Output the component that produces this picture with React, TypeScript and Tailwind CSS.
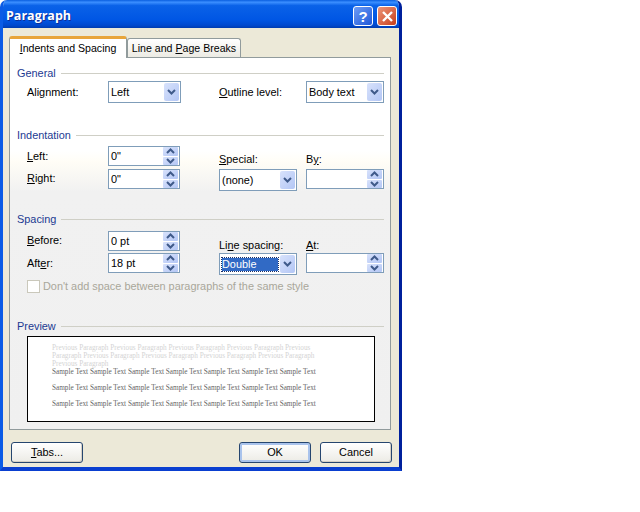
import React from "react";

const Chevron = ({ up = false }: { up?: boolean }) => (
  <svg width="9" height="6" viewBox="0 0 9 6" className={up ? "rotate-180" : ""}>
    <path d="M1 1 L4.5 4.5 L8 1" fill="none" stroke="#3f5a8a" strokeWidth="2" />
  </svg>
);

const Combo = ({ value, width, selected = false }: { value: string; width: string; selected?: boolean }) => (
  <div className={`flex h-[22px] ${width} items-center border border-[#7f9db9] bg-white p-px`}>
    <div className="min-w-0 flex-1">
      {selected ? (
        <span className="ml-px block h-[13px] w-[56px] bg-[#316ac5] leading-[13px] text-white outline-1 outline-dotted outline-[#1a2f66]">{value}</span>
      ) : (
        <span className="pl-px">{value}</span>
      )}
    </div>
    <div className="flex h-[18px] w-[15px] items-center justify-center rounded-[2px] bg-gradient-to-br from-[#d8e2fb] to-[#b3c6f5]">
      <Chevron />
    </div>
  </div>
);

const Spinner = ({ value, width }: { value?: string; width: string }) => (
  <div className={`flex h-[20px] ${width} items-center border border-[#7f9db9] bg-white p-px`}>
    <div className="min-w-0 flex-1 pl-[1px]">{value}</div>
    <div className="flex h-[18px] w-[15px] flex-col gap-px">
      <div className="flex h-[8.5px] items-center justify-center rounded-[1px] bg-gradient-to-br from-[#d8e2fb] to-[#b3c6f5]">
        <Chevron up />
      </div>
      <div className="flex h-[8.5px] items-center justify-center rounded-[1px] bg-gradient-to-br from-[#d8e2fb] to-[#b3c6f5]">
        <Chevron />
      </div>
    </div>
  </div>
);

const SectionHead = ({ title }: { title: string }) => (
  <div className="flex h-[14px] items-center gap-[5px] text-[#1c3a92]">
    <span className="leading-[14px]">{title}</span>
    <div className="h-px flex-1 bg-[#cfcfc6]" />
  </div>
);

const DialogButton = ({ children, primary = false }: { children: React.ReactNode; primary?: boolean }) => (
  <button
    className={`flex h-[21px] w-[72px] items-center justify-center rounded-[3px] border border-[#26466f] bg-gradient-to-b from-white to-[#ecebe5] ${
      primary ? "shadow-[inset_0_0_0_2px_#a9c3ec]" : "shadow-[inset_-1px_-1px_0_#d6d0c5]"
    }`}
  >
    {children}
  </button>
);

const previous = [
  "Previous Paragraph Previous Paragraph Previous Paragraph Previous Paragraph Previous",
  "Paragraph Previous Paragraph Previous Paragraph Previous Paragraph Previous Paragraph",
  "Previous Paragraph",
];
const sample = "Sample Text Sample Text Sample Text Sample Text Sample Text Sample Text Sample Text";

export default function App() {
  return (
    <div className="h-[512px] w-[640px] bg-white font-['Liberation_Sans',sans-serif] text-[10.9px] text-black">
      <div className="flex h-[471px] w-[402px] flex-col overflow-hidden rounded-t-[7px] border-x-[3px] border-b-[4px] border-r-[#00209c] border-l-[#0a5be6] border-b-[#0a3fd0] bg-[#ece9d8]">
        {/* Title bar */}
        <div className="-mx-[3px] flex h-[28px] shrink-0 items-center justify-between bg-[linear-gradient(to_bottom,#0a5fe0_0%,#3b8fff_8%,#0a62e8_20%,#0056e4_70%,#0049cf_90%,#003cb0_100%)] pl-[6px] pr-[5px] pt-[4px]">
          <span className="font-['Open_Sans',sans-serif] text-[12.5px] font-bold text-white [text-shadow:1px_1px_0_#0f2f96]">Paragraph</span>
          <div className="flex gap-[4px]">
            <div className="flex h-[20px] w-[20px] items-center justify-center rounded-[3px] border border-white bg-gradient-to-br from-[#6d9cf5] to-[#1f56d8] text-[15px] font-bold leading-none text-white">?</div>
            <div className="flex h-[20px] w-[20px] items-center justify-center rounded-[3px] border border-white bg-gradient-to-br from-[#ec9478] to-[#c83c14]">
              <svg width="13" height="13" viewBox="0 0 13 13">
                <path d="M2 2 L11 11 M11 2 L2 11" stroke="#fff" strokeWidth="2.4" />
              </svg>
            </div>
          </div>
        </div>

        {/* Tabs */}
        <div className="ml-[6px] mt-[7px] flex h-[22px] items-end text-[10.6px]">
          <div className="z-10 -mb-px flex h-[22px] w-[118px] items-center justify-center rounded-t-[3px] border-x border-t-[3px] border-x-[#919b9c] border-t-[#e8a53a] bg-white">
            <span><u>I</u>ndents and Spacing</span>
          </div>
          <div className="flex h-[19px] w-[114px] items-center justify-center rounded-t-[3px] border-x border-t border-[#919b9c] bg-gradient-to-b from-white to-[#ecebe4] pt-[2px]">
            <span>Line and <u>P</u>age Breaks</span>
          </div>
        </div>

        {/* Panel */}
        <div className="ml-[6px] h-[373px] w-[382px] border border-[#919b9c] bg-[linear-gradient(to_bottom,#ffffff_0%,#ffffff_25%,#fffdf6_28%,#f1f1f1_36%,#f0f0f0_100%)] pb-[7px] pl-[7px] pr-[6px] pt-[8px]">
          <SectionHead title="General" />
          <div className="ml-[10px] mt-px flex items-center">
            <span className="w-[81px]">Ali<u>g</u>nment:</span>
            <Combo value="Left" width="w-[73px]" />
            <span className="ml-[38px] w-[87px]"><u>O</u>utline level:</span>
            <Combo value="Body text" width="w-[78px]" />
          </div>

          <div className="mt-[25px]">
            <SectionHead title="Indentation" />
          </div>
          <div className="ml-[10px] mt-[4px] flex items-start">
            <div className="flex flex-col gap-[3px]">
              <div className="flex items-center">
                <span className="w-[81px]"><u>L</u>eft:</span>
                <Spinner value={'0"'} width="w-[72px]" />
              </div>
              <div className="flex items-center">
                <span className="w-[81px] pb-[2px]"><u>R</u>ight:</span>
                <Spinner value={'0"'} width="w-[72px]" />
              </div>
            </div>
            <div className="ml-[39px] w-[87px] pt-[6px]">
              <div className="mb-[3px] leading-[14px]"><u>S</u>pecial:</div>
              <Combo value="(none)" width="w-[78px]" />
            </div>
            <div className="pt-[6px]">
              <div className="mb-[3px] leading-[14px]">B<u>y</u>:</div>
              <Spinner width="w-[78px]" />
            </div>
          </div>

          <div className="mt-[21px]">
            <SectionHead title="Spacing" />
          </div>
          <div className="ml-[10px] mt-[5px] flex items-start">
            <div className="flex flex-col gap-[2px]">
              <div className="flex items-center">
                <span className="w-[81px] pb-[2px]"><u>B</u>efore:</span>
                <Spinner value="0 pt" width="w-[72px]" />
              </div>
              <div className="flex items-center">
                <span className="w-[81px]">Aft<u>e</u>r:</span>
                <Spinner value="18 pt" width="w-[72px]" />
              </div>
            </div>
            <div className="ml-[39px] w-[87px] pt-[7px]">
              <div className="mb-px leading-[14px]">Li<u>n</u>e spacing:</div>
              <Combo value="Double" width="w-[78px]" selected />
            </div>
            <div className="pt-[7px]">
              <div className="mb-px leading-[14px]"><u>A</u>t:</div>
              <Spinner width="w-[78px]" />
            </div>
          </div>

          <div className="ml-[10px] mt-[4px] flex h-[14px] items-center gap-[3px] text-[#a9a79a]">
            <div className="h-[13px] w-[13px] border border-[#cac8bb] bg-white" />
            <span>Don't add space between paragraphs of the same style</span>
          </div>

          <div className="mt-[26px]">
            <SectionHead title="Preview" />
          </div>
          <div className="ml-[10px] mt-[3px] h-[86px] w-[348px] border border-black bg-white pl-[24px] pt-[7px] font-['Liberation_Serif',serif] text-[7.24px] leading-[8px]">
            {previous.map((line) => (
              <div key={line} className="whitespace-nowrap text-[#d4d4d4]">{line}</div>
            ))}
            <div className="whitespace-nowrap text-[#666666]">{sample}</div>
            <div className="mt-[8px] whitespace-nowrap text-[#666666]">{sample}</div>
            <div className="mt-[8px] whitespace-nowrap text-[#666666]">{sample}</div>
          </div>
        </div>

        {/* Footer */}
        <div className="ml-[8px] mr-[7px] mt-[12px] flex items-center justify-between">
          <DialogButton><span><u>T</u>abs...</span></DialogButton>
          <div className="flex gap-[9px]">
            <DialogButton primary>OK</DialogButton>
            <DialogButton>Cancel</DialogButton>
          </div>
        </div>
      </div>
    </div>
  );
}
